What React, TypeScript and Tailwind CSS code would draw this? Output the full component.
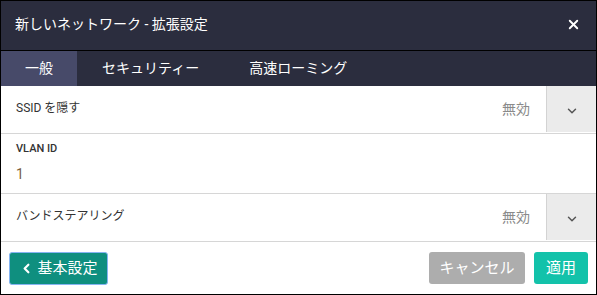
import React from 'react';
import { X, ChevronDown, ChevronLeft } from 'lucide-react';

const tabs = ['一般', 'セキュリティー', '高速ローミング'];

const SelectRow = ({ label, value }: { label: string; value: string }) => (
  <div className="h-[48px] flex border-b border-[#d6d6d6]">
    <div className="flex-1 pl-[15px] pt-[13px] text-[12px] text-[#333]">{label}</div>
    <div className="flex items-center pr-[16px] text-[14px] text-[#8a8a8a]">{value}</div>
    <div className="w-[50px] h-[46px] bg-[#ebebeb] border-l border-[#d3d3d3] flex items-center justify-center">
      <ChevronDown className="w-[14px] h-[14px] text-[#555] mt-[3px]" strokeWidth={2.5} />
    </div>
  </div>
);

export default function App() {
  return (
    <div className="w-[597px] h-[295px] border border-black bg-white flex flex-col font-['Roboto','Noto_Sans_CJK_JP',sans-serif]">
      {/* Header */}
      <div className="h-[50px] shrink-0 bg-[#2b2d3e] border-b border-black flex items-center justify-between pl-[14px] pr-[15px] pb-[3px]">
        <span className="text-white text-[14px]">新しいネットワーク - 拡張設定</span>
        <X className="w-[15px] h-[15px] text-white" strokeWidth={3} />
      </div>

      {/* Tabs */}
      <div className="h-[35px] shrink-0 bg-[#2b2d3e] flex">
        {tabs.map((t, i) => (
          <div
            key={t}
            className={`flex items-center justify-center text-white text-[14px] ${i === 0 ? 'w-[76px] bg-[#474a69]' : 'px-[25px]'}`}
          >
            {t}
          </div>
        ))}
      </div>

      <SelectRow label="SSID を隠す" value="無効" />

      <div className="h-[60px] border-b border-[#d6d6d6] pl-[15px] pt-[7px]">
        <div className="text-[11px] font-medium text-[#333]">VLAN ID</div>
        <div className="text-[14px] text-[#7a5f3e] mt-[6px]">1</div>
      </div>

      <SelectRow label="バンドステアリング" value="無効" />

      {/* Footer */}
      <div className="flex-1 flex items-center justify-between px-[8px]">
        <button className="h-[33px] w-[99px] rounded-[3px] border border-[#85b4f2] bg-[#0f8f7f] text-white text-[15px] flex items-center justify-center gap-[3px]">
          <ChevronLeft className="w-[15px] h-[15px]" strokeWidth={3.5} />
          基本設定
        </button>
        <div className="flex gap-[9px]">
          <button className="h-[32px] w-[96px] rounded-[3px] bg-[#adadad] text-white text-[15px]">キャンセル</button>
          <button className="h-[32px] w-[54px] rounded-[3px] bg-[#13c2aa] text-white text-[15px]">適用</button>
        </div>
      </div>
    </div>
  );
}
